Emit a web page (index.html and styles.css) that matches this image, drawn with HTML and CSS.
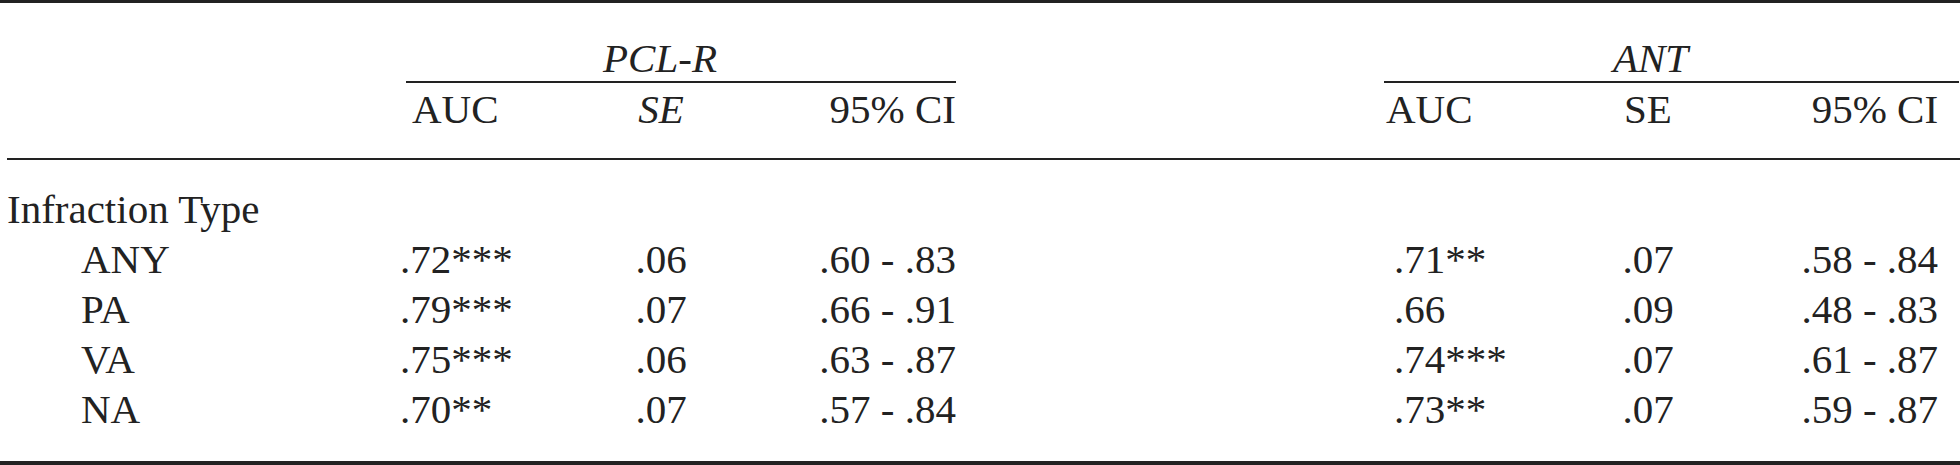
FILE: index.html
```html
<!DOCTYPE html>
<html lang="en">
<head>
  <meta charset="UTF-8" />
  <title>AUC by Infraction Type</title>
  <link rel="stylesheet" href="styles.css">
</head>
<body>

  <table class="auc-table">
    <colgroup>
      <col class="c-label">
      <col class="c-auc">
      <col class="c-se">
      <col class="c-ci">
      <col class="c-gap">
      <col class="c-auc">
      <col class="c-se2">
      <col class="c-ci2">
    </colgroup>
    <thead>
      <tr class="spanners">
        <td></td>
        <th colspan="3"><div class="spanner pcl">PCL-R</div></th>
        <td></td>
        <th colspan="3"><div class="spanner ant">ANT</div></th>
      </tr>
      <tr class="col-heads">
        <td></td>
        <th class="auc-head pcl-auc">AUC</th>
        <th class="mid"><i>SE</i></th>
        <th class="right">95% CI</th>
        <td></td>
        <th class="auc-head ant-auc">AUC</th>
        <th class="mid">SE</th>
        <th class="right last">95% CI</th>
      </tr>
    </thead>
    <tbody>
      <tr class="group-row">
        <td class="group">Infraction Type</td>
        <td colspan="7"></td>
      </tr>
      <tr>
        <td class="sub">ANY</td>
        <td>.72***</td>
        <td class="mid">.06</td>
        <td class="right">.60 - .83</td>
        <td></td>
        <td class="ant-val">.71**</td>
        <td class="mid">.07</td>
        <td class="right last">.58 - .84</td>
      </tr>
      <tr>
        <td class="sub">PA</td>
        <td>.79***</td>
        <td class="mid">.07</td>
        <td class="right">.66 - .91</td>
        <td></td>
        <td class="ant-val">.66</td>
        <td class="mid">.09</td>
        <td class="right last">.48 - .83</td>
      </tr>
      <tr>
        <td class="sub">VA</td>
        <td>.75***</td>
        <td class="mid">.06</td>
        <td class="right">.63 - .87</td>
        <td></td>
        <td class="ant-val">.74***</td>
        <td class="mid">.07</td>
        <td class="right last">.61 - .87</td>
      </tr>
      <tr class="last-row">
        <td class="sub">NA</td>
        <td>.70**</td>
        <td class="mid">.07</td>
        <td class="right">.57 - .84</td>
        <td></td>
        <td class="ant-val">.73**</td>
        <td class="mid">.07</td>
        <td class="right last">.59 - .87</td>
      </tr>
    </tbody>
  </table>

</body>
</html>
```

FILE: styles.css
```css
body {
  margin: 0;
  padding: 0;
  background: #fff;
  color: #222;
  font-family: 'Liberation Serif', 'Times New Roman', serif;
  font-size: 41px;
}

.auc-table {
  width: 1960px;
  table-layout: fixed;
  border-collapse: separate;
  border-spacing: 0;
  border-top: 3px solid #222;
  border-bottom: 4px solid #222;
}

.c-label { width: 400px; }
.c-auc { width: 183px; }
.c-se { width: 156px; }
.c-ci { width: 217px; }
.c-gap { width: 428px; }
.c-se2 { width: 162px; }
.c-ci2 { width: 234px; }

.auc-table th,
.auc-table td {
  padding: 0;
  line-height: 50px;
  font-weight: normal;
  text-align: left;
  white-space: nowrap;
  vertical-align: top;
}

/* spanning group headers */
.spanners th {
  padding-top: 32px;
}

.spanner {
  font-style: italic;
  text-align: center;
  line-height: 46px;
  padding-right: 42px;
  border-bottom: 2px solid #222;
}

.spanner.pcl { margin-left: 6px; }
.spanner.ant { margin-right: 4px; }

/* column headings */
.col-heads th,
.col-heads td {
  padding-top: 1px;
  padding-bottom: 24px;
  border-bottom: 2px solid #222;
}

.col-heads td:first-child {
  border-bottom: none;
  background: linear-gradient(#222, #222) no-repeat 7px 100% / calc(100% - 7px) 2px;
}

.pcl-auc { padding-left: 12px !important; }
.ant-auc { padding-left: 2px !important; }
.ant-val { padding-left: 10px !important; }

.auc-table .mid { text-align: center; }
.auc-table .right { text-align: right; }
.auc-table .last { padding-right: 25px; }

/* body rows */
.group-row td {
  padding-top: 24px;
}

.group {
  padding-left: 7px !important;
}

.sub {
  padding-left: 81px !important;
}

.last-row td {
  padding-bottom: 27px;
}
```
